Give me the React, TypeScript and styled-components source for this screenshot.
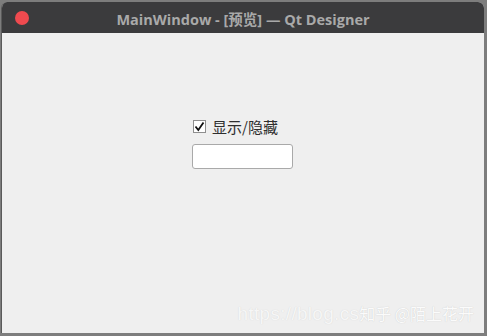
import React from "react";
import styled, { createGlobalStyle } from "styled-components";

const Global = createGlobalStyle`
  html, body { margin: 0; padding: 0; background: #7d7d7d; }
  body { width: 487px; height: 336px; overflow: hidden; }
`;

const Frame = styled.div`
  box-sizing: border-box;
  width: 487px;
  height: 336px;
  padding: 2px 3px 3px 1px;
  background: #7d7d7d;
`;

const Window = styled.div`
  display: flex;
  flex-direction: column;
  height: 100%;
  border-radius: 6px 6px 0 0;
  overflow: hidden;
  background: #efefef;
  border-left: 1px solid #5a5a5a;
`;

const TitleBar = styled.div`
  position: relative;
  height: 31px;
  flex: none;
  background: #3b3b3d;
  display: flex;
  align-items: center;
  justify-content: center;
`;

const Close = styled.span`
  position: absolute;
  left: 13px;
  top: 9px;
  width: 14px;
  height: 14px;
  border-radius: 50%;
  background: #ef4a4f;
`;

const Title = styled.span`
  font-family: "Open Sans", "Noto Sans CJK SC", sans-serif;
  font-weight: 700;
  font-size: 14.5px;
  color: #a9a9a9;
  margin-top: 1px;
`;

const Body = styled.div`
  position: relative;
  flex: 1;
  display: flex;
  flex-direction: column;
  padding: 84px 0 0 190px;
  gap: 9px;
`;

const CheckRow = styled.label`
  display: flex;
  align-items: center;
  gap: 6px;
  font-family: "Noto Sans CJK SC", sans-serif;
  font-size: 15px;
  color: #2e2e2e;
  height: 18px;
  margin-left: 1px;
`;

const Box = styled.span`
  box-sizing: border-box;
  width: 13px;
  height: 13px;
  border: 1px solid #8e8e8e;
  background: #fff;
  display: flex;
  align-items: center;
  justify-content: center;
`;

const Input = styled.input`
  box-sizing: border-box;
  width: 101px;
  height: 25px;
  margin: 0;
  border: 1px solid #a9a9a9;
  border-radius: 3px;
  background: #fff;
  outline: none;
`;

const Watermark = styled.div`
  position: absolute;
  right: 10px;
  bottom: 8px;
  display: flex;
  align-items: baseline;
  font-family: "Noto Sans CJK SC", sans-serif;
  color: #fbfbfb;
  text-shadow: 0 0 1px #c4c4c4;
`;

const Url = styled.span`
  font-family: "Liberation Sans", sans-serif;
  font-size: 19px;
  letter-spacing: 0.3px;
  color: #f6f6f6;
  text-shadow: 0 0 1px #d2d2d2;
`;

const Zhihu = styled.span`
  font-size: 16px;
`;

export default function App() {
  return (
    <Frame>
      <Global />
      <Window>
        <TitleBar>
          <Close />
          <Title>MainWindow - [预览] — Qt Designer</Title>
        </TitleBar>
        <Body>
          <CheckRow>
            <Box>
              <svg width="11" height="11" viewBox="0 0 11 11">
                <path d="M1.5 5.5 L4.3 9 L9.5 1.5" fill="none" stroke="#111" strokeWidth="1.8" />
              </svg>
            </Box>
            显示/隐藏
          </CheckRow>
          <Input />
          <Watermark>
            <Url>https://blog.cs</Url>
            <Zhihu>知乎 @陌上花开</Zhihu>
          </Watermark>
        </Body>
      </Window>
    </Frame>
  );
}
